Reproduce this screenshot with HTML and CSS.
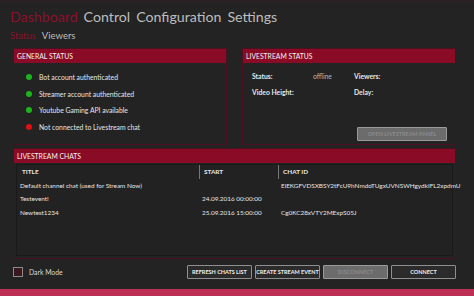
FILE: index.html
```html
<!DOCTYPE html>
<html lang="en">
<head>
    <meta charset="UTF-8">
    <meta name="viewport" content="width=device-width, initial-scale=1.0">
    <title>Dashboard</title>
    <link rel="stylesheet" href="styles.css">
</head>
<body>

    <div class="window">
        <!-- Main navigation -->
        <nav class="main-nav">
            <span class="active">Dashboard</span>
            <span>Control</span>
            <span>Configuration</span>
            <span>Settings</span>
        </nav>
        <nav class="sub-nav">
            <span class="active">Status</span>
            <span>Viewers</span>
        </nav>

        <div class="content">
            <div class="panel-row">
                <!-- General status -->
                <div class="panel">
                    <div class="panel-header">General Status</div>
                    <ul class="status-list">
                        <li><span class="dot ok"></span>Bot account authenticated</li>
                        <li><span class="dot ok"></span>Streamer account authenticated</li>
                        <li><span class="dot ok"></span>Youtube Gaming API available</li>
                        <li><span class="dot bad"></span>Not connected to Livestream chat</li>
                    </ul>
                </div>

                <!-- Livestream status -->
                <div class="panel">
                    <div class="panel-header">Livestream Status</div>
                    <div class="stream-body">
                        <div class="stream-grid">
                            <span class="label">Status:</span>
                            <span class="value">offline</span>
                            <span class="label">Viewers:</span>
                            <span class="value"></span>
                            <span class="label">Video Height:</span>
                            <span class="value"></span>
                            <span class="label">Delay:</span>
                            <span class="value"></span>
                        </div>
                        <button class="btn disabled panel-btn">Open Livestream Panel</button>
                    </div>
                </div>
            </div>

            <!-- Livestream chats -->
            <div class="panel chats">
                <div class="panel-header">Livestream Chats</div>
                <div class="chat-table">
                    <div class="th">Title</div>
                    <div class="th sep">Start</div>
                    <div class="th sep">Chat ID</div>

                    <div class="td">Default channel chat (used for Stream Now)</div>
                    <div class="td"></div>
                    <div class="td">EiEKGFVDSXBSY2tFcU9hNmdoTUgxUVNSWHgydkIFL2xpdmU</div>

                    <div class="td">Testevent!</div>
                    <div class="td">24.09.2016 00:00:00</div>
                    <div class="td"></div>

                    <div class="td">Newtest1234</div>
                    <div class="td">25.09.2016 15:00:00</div>
                    <div class="td">Cg0KC28xVTY2MExpS05J</div>
                </div>
            </div>

            <!-- Bottom actions -->
            <div class="actions">
                <label class="dark-mode"><span class="checkbox"></span>Dark Mode</label>
                <div class="buttons">
                    <button class="btn">Refresh Chats List</button>
                    <button class="btn">Create Stream Event</button>
                    <button class="btn disabled">Disconnect</button>
                    <button class="btn">Connect</button>
                </div>
            </div>
        </div>

        <div class="footer-bar"></div>
    </div>

</body>
</html>
```

FILE: styles.css
```css
* {
    box-sizing: border-box;
    margin: 0;
    padding: 0;
}

body {
    font-family: 'Lato', 'Open Sans', sans-serif;
    background-color: #232323;
    color: #e6e6e6;
    width: 474px;
    height: 296px;
    overflow: hidden;
}

.window {
    height: 296px;
    display: flex;
    flex-direction: column;
    border-top: 2px solid #2c2024;
}

/* Navigation */
.main-nav {
    display: flex;
    gap: 6px;
    padding: 5px 0 0 10px;
    font-size: 14.2px;
    line-height: 20px;
    color: #bdbdbd;
}

.sub-nav {
    display: flex;
    gap: 6px;
    padding: 2px 0 0 10px;
    font-size: 9.5px;
    line-height: 13px;
    color: #bdbdbd;
}

.main-nav .active,
.sub-nav .active {
    color: #8e0f2a;
}

.content {
    flex: 1;
    padding: 6px 18px 0 13px;
}

.panel-row {
    display: flex;
    gap: 15px;
    height: 97px;
}

/* Panels */
.panel {
    flex: 1;
    border: 1px solid #4a1220;
    display: flex;
    flex-direction: column;
}

.panel-header {
    background-color: #8a0b26;
    color: #f2f2f2;
    font-size: 6.8px;
    text-transform: uppercase;
    height: 14px;
    line-height: 14px;
    padding-left: 3px;
}

.status-list {
    list-style: none;
    padding: 6px 0 0 12px;
}

.status-list li {
    display: flex;
    align-items: center;
    font-size: 6.8px;
    height: 16.5px;
}

.dot {
    width: 6px;
    height: 6px;
    border-radius: 50%;
    margin-right: 7px;
}

.dot.ok {
    background-color: #1cb41c;
}

.dot.bad {
    background-color: #e01010;
}

.stream-body {
    flex: 1;
    display: flex;
    flex-direction: column;
    padding: 8px 8px 3px 9px;
}

.stream-grid {
    display: grid;
    grid-template-columns: 61px 41px 50px 1fr;
    row-gap: 6px;
    font-size: 6.8px;
    line-height: 10px;
}

.stream-grid .label {
    font-weight: bold;
}

.stream-grid .value {
    color: #b8b8b8;
}

.btn.panel-btn {
    margin-top: auto;
    align-self: flex-end;
    width: 90px;
}

/* Chats */
.panel.chats {
    margin-top: 3px;
    height: 111px;
    flex: none;
}

.chat-table {
    flex: 1;
    margin: 1px 2px 2px;
    background-color: #222;
    border: 1px solid #1a1a1a;
    display: grid;
    grid-template-columns: 182px 79px 1fr;
    grid-auto-rows: 13.5px;
    align-content: start;
    font-size: 6.4px;
}

.th {
    font-weight: bold;
    text-transform: uppercase;
    padding: 2px 0 0 5px;
    line-height: 10px;
}

.th.sep {
    border-left: 1px solid #777;
    padding-left: 4px;
}

.td {
    line-height: 13.5px;
    padding-left: 3px;
    white-space: nowrap;
}

.td:nth-child(3n+2),
.td:nth-child(3n+3) {
    padding-left: 3px;
}

/* Bottom */
.actions {
    display: flex;
    justify-content: space-between;
    align-items: center;
    margin-top: 5px;
    height: 16px;
}

.dark-mode {
    display: flex;
    align-items: center;
    font-size: 6.8px;
    color: #d8d8d8;
}

.checkbox {
    width: 10px;
    height: 10px;
    border: 1px solid #8a8a8a;
    background-color: #3a1620;
    margin-right: 6px;
}

.buttons {
    display: flex;
    gap: 3px;
}

.btn {
    font-family: 'Lato', sans-serif;
    background-color: #2b2b2b;
    color: #f0f0f0;
    border: 1px solid #8f8f8f;
    border-radius: 1px;
    font-size: 5.5px;
    font-weight: bold;
    text-transform: uppercase;
    white-space: nowrap;
    height: 14px;
    width: 65px;
}

.btn.disabled {
    background-color: #6c6c6c;
    color: #8a8a8a;
    border-color: #9a9a9a;
}

.footer-bar {
    height: 7px;
    background-color: #bd2f55;
}
```
